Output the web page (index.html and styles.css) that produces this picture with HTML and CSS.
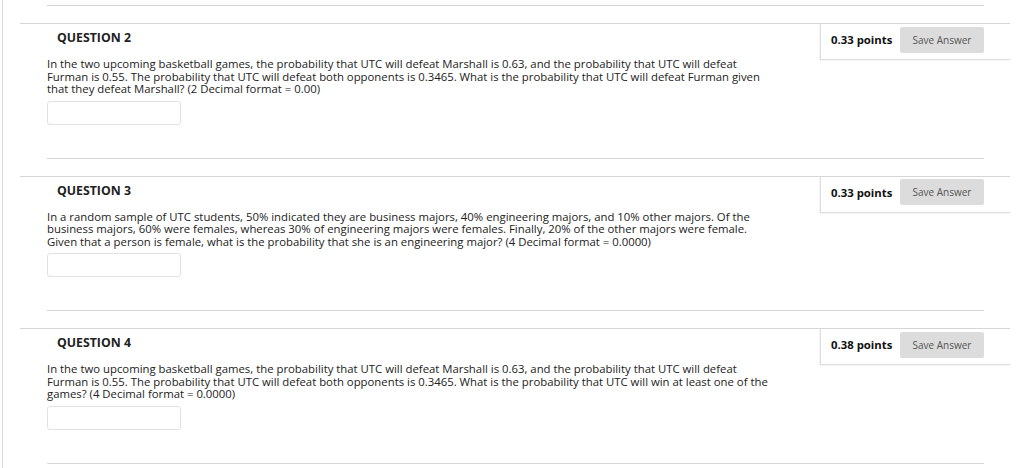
FILE: index.html
```html
<!DOCTYPE html>
<html>
<head>
<meta charset="utf-8">
<link rel="stylesheet" href="styles.css">
</head>
<body>
<div class="page">
  <div class="rule-top"></div>

  <section class="question">
    <div class="q-points">
      <span class="pts">0.33 points</span>
      <button class="save">Save Answer</button>
    </div>
    <h3 class="q-title">QUESTION 2</h3>
    <div class="q-body">
      <p class="q-text">In the two upcoming basketball games, the probability that UTC will defeat Marshall is 0.63, and the probability that UTC will defeat Furman is 0.55. The probability that UTC will defeat both opponents is 0.3465. What is the probability that UTC will defeat Furman given that they defeat Marshall? (2 Decimal format = 0.00)</p>
      <input class="answer" type="text">
    </div>
  </section>

  <section class="question">
    <div class="q-points">
      <span class="pts">0.33 points</span>
      <button class="save">Save Answer</button>
    </div>
    <h3 class="q-title">QUESTION 3</h3>
    <div class="q-body">
      <p class="q-text">In a random sample of UTC students, 50% indicated they are business majors, 40% engineering majors, and 10% other majors. Of the business majors, 60% were females, whereas 30% of engineering majors were females. Finally, 20% of the other majors were female. Given that a person is female, what is the probability that she is an engineering major? (4 Decimal format = 0.0000)</p>
      <input class="answer" type="text">
    </div>
  </section>

  <section class="question">
    <div class="q-points">
      <span class="pts">0.38 points</span>
      <button class="save">Save Answer</button>
    </div>
    <h3 class="q-title">QUESTION 4</h3>
    <div class="q-body">
      <p class="q-text">In the two upcoming basketball games, the probability that UTC will defeat Marshall is 0.63, and the probability that UTC will defeat Furman is 0.55. The probability that UTC will defeat both opponents is 0.3465. What is the probability that UTC will win at least one of the games? (4 Decimal format = 0.0000)</p>
      <input class="answer" type="text">
    </div>
  </section>
</div>
</body>
</html>
```

FILE: styles.css
```css
* { box-sizing: border-box; }
html, body {
  margin: 0;
  padding: 0;
  background: #fff;
}
body {
  font-family: "Open Sans", "Liberation Sans", sans-serif;
  color: #222;
  height: 468px;
  overflow: hidden;
}
.page {
  margin-left: 2px;
  border-left: 1px solid #dcdcdc;
  min-height: 468px;
  padding-top: 5px;
}
.rule-top {
  margin-left: 44px;
  width: 937px;
  border-top: 1px solid #d6d6d6;
}
.question {
  margin-left: 17px;
  width: 990px;
  margin-top: 17px;
  border-top: 1px solid #d6d6d6;
}
.q-points {
  float: right;
  width: 190px;
  height: 36px;
  border-left: 1px solid #dedede;
  border-bottom: 1px solid #dedede;
  box-shadow: -1px 1px 1px rgba(0,0,0,0.04);
  display: flex;
  align-items: center;
  padding: 2px 26px 6px 10px;
  justify-content: space-between;
}
.pts {
  font-size: 11.35px;
  font-weight: 700;
  color: #111;
}
.save {
  width: 84px;
  height: 26px;
  border: none;
  border-radius: 2px;
  background: #dcdcdc;
  color: #555;
  font-family: "Open Sans", "Liberation Sans", sans-serif;
  font-size: 10px;
  padding: 0;
}
.q-title {
  margin: 0 0 0 37px;
  padding-top: 6px;
  font-size: 12.3px;
  line-height: 16px;
  font-weight: 700;
  color: #222;
}
.q-body {
  margin-left: 27px;
  width: 937px;
  margin-top: 12px;
  padding-bottom: 33px;
  border-bottom: 1px solid #d6d6d6;
}
.q-text {
  margin: 0;
  width: 728px;
  font-size: 11.35px;
  line-height: 12.5px;
  color: #222;
}
.answer {
  display: block;
  margin-top: 5px;
  width: 134px;
  height: 24px;
  border: 1px solid #e2e2e2;
  border-radius: 3px;
  background: #fff;
}
```
